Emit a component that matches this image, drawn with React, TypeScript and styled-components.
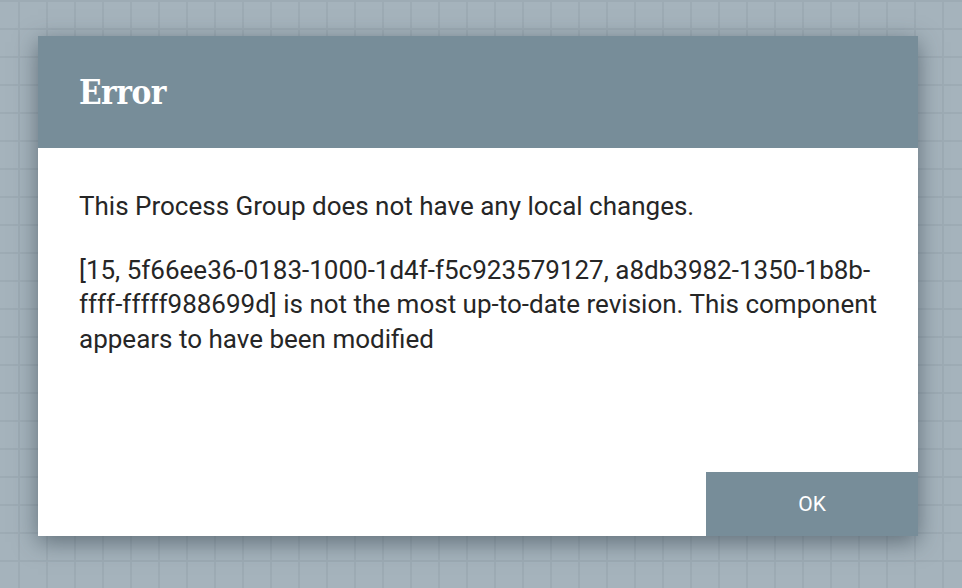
import styled, { createGlobalStyle } from 'styled-components';

const GlobalStyle = createGlobalStyle`
  html, body {
    margin: 0;
    padding: 0;
  }
  body {
    font-family: Roboto, "Liberation Sans", Arial, sans-serif;
  }
`;

// canvas backdrop with the faint 28px grid
const Canvas = styled.div`
  width: 962px;
  height: 588px;
  box-sizing: border-box;
  padding: 36px 0 0 38px;
  background-color: #a5b3bc;
  background-image:
    linear-gradient(to right, #9dabb4 2px, transparent 2px),
    linear-gradient(to bottom, #9dabb4 2px, transparent 2px);
  background-size: 28px 28px;
  background-position: 18px 0px, 0px 0px;
  overflow: hidden;
`;

const Dialog = styled.div`
  width: 880px;
  height: 500px;
  background: #ffffff;
  display: flex;
  flex-direction: column;
  box-shadow: 0 6px 22px rgba(40, 55, 65, 0.55);
`;

const DialogHeader = styled.header`
  height: 112px;
  flex-shrink: 0;
  background: #778d99;
  display: flex;
  align-items: center;
  padding: 0 41px;
`;

const Title = styled.h1`
  margin: 0;
  color: #ffffff;
  font-family: "DejaVu Serif Condensed", "DejaVu Serif", serif;
  font-stretch: condensed;
  font-weight: bold;
  font-size: 33px;
  letter-spacing: -0.5px;
`;

const DialogBody = styled.div`
  flex: 1;
  padding: 41px 40px 0 41px;
  color: #262626;
  font-size: 26px;
  line-height: 34.5px;
`;

const Message = styled.p`
  margin: 0 0 29px;
`;

const DialogFooter = styled.footer`
  display: flex;
  justify-content: flex-end;
`;

const OkButton = styled.button`
  width: 212px;
  height: 64px;
  border: none;
  background: #778d99;
  color: #ffffff;
  font-family: Roboto, "Liberation Sans", sans-serif;
  font-weight: 400;
  font-size: 21px;
  cursor: pointer;
`;

export default function App() {
  return (
    <>
      <GlobalStyle />
      <Canvas>
        <Dialog>
          <DialogHeader>
            <Title>Error</Title>
          </DialogHeader>
          <DialogBody>
            <Message>This Process Group does not have any local changes.</Message>
            <Message>
              [15, 5f66ee36-0183-1000-1d4f-f5c923579127, a8db3982-1350-1b8b-ffff-fffff988699d] is not
              the most up-to-date revision. This component appears to have been modified
            </Message>
          </DialogBody>
          <DialogFooter>
            <OkButton>OK</OkButton>
          </DialogFooter>
        </Dialog>
      </Canvas>
    </>
  );
}
